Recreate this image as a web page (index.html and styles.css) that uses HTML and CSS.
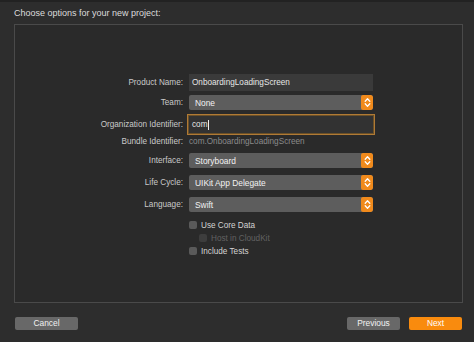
FILE: index.html
```html
<!DOCTYPE html>
<html>
<head>
<meta charset="utf-8">
<link rel="stylesheet" href="styles.css">
</head>
<body>
<div class="window">
  <div class="title">Choose options for your new project:</div>
  <div class="panel">
    <div class="form">
      <div class="row">
        <span class="label">Product Name:</span>
        <div class="field">OnboardingLoadingScreen</div>
      </div>
      <div class="row pop mt4">
        <span class="label">Team:</span>
        <div class="popup"><span class="ptext">None</span><span class="arrow"><svg width="7" height="11" viewBox="0 0 7 11"><path d="M1.2 4.2 L3.5 1.8 L5.8 4.2 M1.2 6.8 L3.5 9.2 L5.8 6.8" fill="none" stroke="#fff" stroke-width="1.3" stroke-linecap="round" stroke-linejoin="round"/></svg></span></div>
      </div>
      <div class="row mt6">
        <span class="label">Organization Identifier:</span>
        <div class="field focus">com<span class="caret"></span></div>
      </div>
      <div class="row mt2 short">
        <span class="label">Bundle Identifier:</span>
        <span class="static">com.OnboardingLoadingScreen</span>
      </div>
      <div class="row pop mt6">
        <span class="label">Interface:</span>
        <div class="popup"><span class="ptext">Storyboard</span><span class="arrow"><svg width="7" height="11" viewBox="0 0 7 11"><path d="M1.2 4.2 L3.5 1.8 L5.8 4.2 M1.2 6.8 L3.5 9.2 L5.8 6.8" fill="none" stroke="#fff" stroke-width="1.3" stroke-linecap="round" stroke-linejoin="round"/></svg></span></div>
      </div>
      <div class="row pop mt7">
        <span class="label">Life Cycle:</span>
        <div class="popup"><span class="ptext">UIKit App Delegate</span><span class="arrow"><svg width="7" height="11" viewBox="0 0 7 11"><path d="M1.2 4.2 L3.5 1.8 L5.8 4.2 M1.2 6.8 L3.5 9.2 L5.8 6.8" fill="none" stroke="#fff" stroke-width="1.3" stroke-linecap="round" stroke-linejoin="round"/></svg></span></div>
      </div>
      <div class="row pop mt7">
        <span class="label">Language:</span>
        <div class="popup"><span class="ptext">Swift</span><span class="arrow"><svg width="7" height="11" viewBox="0 0 7 11"><path d="M1.2 4.2 L3.5 1.8 L5.8 4.2 M1.2 6.8 L3.5 9.2 L5.8 6.8" fill="none" stroke="#fff" stroke-width="1.3" stroke-linecap="round" stroke-linejoin="round"/></svg></span></div>
      </div>
      <div class="row mt7 short">
        <span></span>
        <label class="check"><span class="box"></span>Use Core Data</label>
      </div>
      <div class="row mt1 short">
        <span></span>
        <label class="check indent disabled"><span class="box"></span>Host in CloudKit</label>
      </div>
      <div class="row mt1 short">
        <span></span>
        <label class="check"><span class="box"></span>Include Tests</label>
      </div>
    </div>
  </div>
  <div class="footer">
    <button class="btn wide">Cancel</button>
    <div class="right">
      <button class="btn">Previous</button>
      <button class="btn primary">Next</button>
    </div>
  </div>
</div>
</body>
</html>
```

FILE: styles.css
```css
html, body {
  margin: 0;
  padding: 0;
}
body {
  background: #2d2d2d;
  font-family: "Liberation Sans", Arial, sans-serif;
  width: 474px;
  height: 342px;
  overflow: hidden;
}
.window {
  border-top: 2px solid #222;
  height: 340px;
}
.title {
  padding: 5px 0 0 14px;
  font-size: 9px;
  line-height: 12px;
  color: #dcdcdc;
}
.panel {
  margin: 5px 0 0 14px;
  width: 447px;
  height: 228px;
  background: #2a2a2a;
  border: 1px solid #4a4a4a;
  padding-top: 49px;
}
.form {
  display: flex;
  flex-direction: column;
}
.row {
  display: grid;
  grid-template-columns: 168px 184px;
  column-gap: 6px;
  align-items: center;
  height: 17px;
}
.row.pop { height: 15px; }
.row.short { height: 12px; }
.mt1 { margin-top: 1px; }
.mt2 { margin-top: 2px; }
.mt4 { margin-top: 4px; }
.mt6 { margin-top: 6px; }
.mt7 { margin-top: 7px; }
.label {
  text-align: right;
  font-size: 8.2px;
  color: #c9c9c9;
  white-space: nowrap;
}
.field {
  height: 17px;
  line-height: 17px;
  background: #3a3a3a;
  color: #e6e6e6;
  font-size: 8.2px;
  padding-left: 3px;
  box-sizing: border-box;
}
.field.focus {
  background: #323232;
  box-shadow: 0 0 0 1px #6b5028, 0 0 0 2px #b07a35;
  display: flex;
  align-items: center;
}
.caret {
  display: inline-block;
  width: 1px;
  height: 10px;
  background: #f0f0f0;
  margin-left: 1px;
}
.static {
  font-size: 8.2px;
  color: #8a8a8a;
}
.popup {
  height: 15px;
  display: flex;
  align-items: center;
  background: #5d5d5d;
  border-radius: 2px;
  overflow: hidden;
}
.ptext {
  flex: 1;
  padding-left: 6px;
  font-size: 8.4px;
  color: #f2f2f2;
}
.arrow {
  width: 12px;
  height: 15px;
  background: #f08a1c;
  border-radius: 2px;
  display: flex;
  align-items: center;
  justify-content: center;
}
.check {
  display: flex;
  align-items: center;
  font-size: 8.2px;
  color: #d4d4d4;
  height: 12px;
}
.box {
  width: 8px;
  height: 8px;
  background: #5a5a5a;
  border-radius: 2px;
  margin-right: 4px;
}
.check.indent { padding-left: 10px; }
.check.disabled { color: #626262; }
.check.disabled .box { background: #3d3d3d; }
.footer {
  display: flex;
  justify-content: space-between;
  align-items: center;
  padding: 14px 12px 0 15px;
}
.right {
  display: flex;
  gap: 9px;
}
.btn {
  font-family: "Liberation Sans", Arial, sans-serif;
  font-size: 8.4px;
  color: #f2f2f2;
  background: #686868;
  border: none;
  border-radius: 2px;
  width: 53px;
  height: 13px;
  padding: 0;
  line-height: 13px;
}
.btn.wide { width: 63px; }
.btn.primary { background: #f98b0e; color: #fff; }
```
